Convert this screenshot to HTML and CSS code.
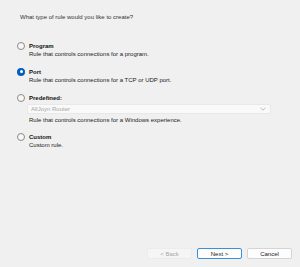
FILE: index.html
```html
<!DOCTYPE html>
<html>
<head>
<meta charset="utf-8">
<link rel="stylesheet" href="styles.css">
</head>
<body>
<div class="page">
  <p class="title">What type of rule would you like to create?</p>
  <div class="options">
    <div class="option">
      <div class="row"><span class="radio"></span><span class="label">Program</span></div>
      <div class="desc">Rule that controls connections for a program.</div>
    </div>
    <div class="option">
      <div class="row"><span class="radio checked"></span><span class="label">Port</span></div>
      <div class="desc">Rule that controls connections for a TCP or UDP port.</div>
    </div>
    <div class="option tight">
      <div class="row"><span class="radio"></span><span class="label">Predefined:</span></div>
      <div class="select"><span>AllJoyn Router</span>
        <svg class="chev" width="6" height="4" viewBox="0 0 6 4"><path d="M0.5 0.8 L3 3.2 L5.5 0.8" fill="none" stroke="#a0a0a0" stroke-width="0.7"/></svg>
      </div>
      <div class="desc">Rule that controls connections for a Windows experience.</div>
    </div>
    <div class="option">
      <div class="row"><span class="radio"></span><span class="label">Custom</span></div>
      <div class="desc">Custom rule.</div>
    </div>
  </div>
  <div class="buttons">
    <button class="btn disabled">&lt; Back</button>
    <button class="btn primary">Next &gt;</button>
    <button class="btn">Cancel</button>
  </div>
</div>
</body>
</html>
```
FILE: styles.css
```css
html, body {
  margin: 0;
  padding: 0;
  background: #f0f0f0;
}
.page {
  width: 300px;
  height: 267px;
  box-sizing: border-box;
  font-family: "Liberation Sans", Arial, sans-serif;
  font-size: 6px;
  color: #1a1a1a;
  padding: 13px 0 0 20px;
  display: flex;
  flex-direction: column;
}
.title {
  margin: 0;
  line-height: 8px;
  color: #333;
}
.options {
  margin-top: 20px;
  display: flex;
  flex-direction: column;
  gap: 8px;
}
.option.tight {
  margin-bottom: -1px;
}
.row {
  display: flex;
  align-items: center;
  height: 9px;
  margin-left: -3px;
}
.radio {
  width: 6px;
  height: 6px;
  border: 1px solid #8a8a8a;
  border-radius: 50%;
  background: #f7f7f7;
  margin-right: 4px;
  flex: none;
  position: relative;
}
.radio.checked {
  border: none;
  width: 8px;
  height: 8px;
  background: #005fb8;
}
.radio.checked::after {
  content: "";
  position: absolute;
  left: 2.5px;
  top: 2.5px;
  width: 3px;
  height: 3px;
  border-radius: 50%;
  background: #fff;
}
.label {
  font-weight: bold;
  color: #111;
}
.desc {
  line-height: 9px;
  margin-left: 9px;
  color: #222;
}
.select {
  margin: 2px 0 2px 7px;
  width: 244px;
  height: 10px;
  box-sizing: border-box;
  background: #f9f9f9;
  border: 1px solid #e8e8e8;
  border-radius: 2px;
  display: flex;
  align-items: center;
  justify-content: space-between;
  padding: 0 4px 0 3px;
  color: #a6a6a6;
}
.buttons {
  margin-top: auto;
  margin-bottom: 8px;
  display: flex;
  justify-content: flex-end;
  gap: 5px;
  padding-right: 8px;
}
.btn {
  width: 45px;
  height: 11px;
  padding: 0;
  font: inherit;
  background: #fdfdfd;
  border: 1px solid #d4d4d4;
  border-radius: 2px;
  color: #1a1a1a;
}
.btn.disabled {
  background: #f5f5f5;
  border-color: #ececec;
  color: #a8a8a8;
}
.btn.primary {
  border-color: #3b8fd9;
}
```
